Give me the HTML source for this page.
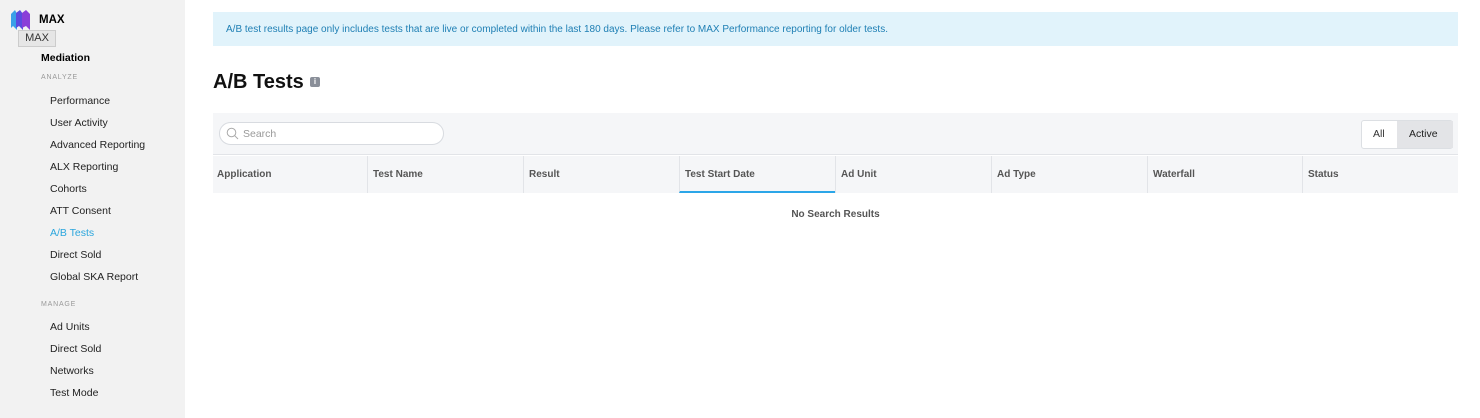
<!DOCTYPE html>
<html><head><style>
*{box-sizing:border-box;margin:0;padding:0}
body{width:1480px;height:418px;overflow:hidden;background:#fff;font-family:"Liberation Sans",sans-serif;position:relative}
.side{position:absolute;left:0;top:0;width:185px;height:418px;background:#f2f2f2}
.side .it{position:absolute;left:50px;font-size:10.5px;color:#222}
.side .hd{position:absolute;left:41px;font-size:7px;color:#999;letter-spacing:.8px}
.banner{position:absolute;left:213px;top:12px;width:1245px;height:34px;background:#e1f3fb;color:#1e7fb4;font-size:10px;line-height:35px;padding-left:13px}
h1{position:absolute;left:213px;top:71px;font-size:20px;font-weight:bold;color:#111}
.info{position:absolute;left:310px;top:77px;width:10px;height:10px;background:#8a8f99;border-radius:2px;color:#fff;font-size:8px;text-align:center;line-height:10px;font-weight:bold}
.tb{position:absolute;left:213px;top:113px;width:1245px;height:42px;background:#f5f6f8;border-bottom:1px solid #e2e4e8}
.search{position:absolute;left:6px;top:9px;width:225px;height:23px;border:1px solid #d8dbe0;border-radius:12px;background:#fff;font-size:10.5px;color:#999;line-height:22px;padding-left:23px}
.seg{position:absolute;left:1148px;top:7px;width:92px;height:29px;border:1px solid #dcdfe3;border-radius:3px;background:#fff;font-size:10.5px}
.seg span{position:absolute;top:0;line-height:27px}
.hr{position:absolute;left:213px;top:156px;width:1245px;height:37px;background:#f5f6f8}
.col{position:absolute;top:0;height:37px;border-left:1px solid #e2e4e8;font-size:10px;font-weight:bold;color:#555;line-height:37px;padding-left:5px}
</style></head><body>
<div class="side">
<svg style="position:absolute;left:10px;top:10px" width="22" height="20" viewBox="0 0 22 20"><path d="M1 4 L5 0 L7 4 L7 20 L3 16 L1 18Z" fill="#3aa0e8"/><path d="M6 3 L10 0 L13 4 L13 20 L9 16 L6 18Z" fill="#5a4be0"/><path d="M12 3 L16 0 L20 4 L20 20 L16 16 L12 18Z" fill="#8a3ed8"/></svg>
<div style="position:absolute;left:39px;top:14px;font-size:11.5px;font-weight:bold">MAX</div>
<div style="position:absolute;left:18px;top:30px;width:38px;height:17px;background:#e6e6e6;border:1px solid #ccc;font-size:11px;line-height:15px;text-align:center;color:#333">MAX</div>
<div style="position:absolute;left:41px;top:52px;font-size:10.5px;font-weight:bold">Mediation</div>
<div class="hd" style="top:74px">ANALYZE</div>
<div class="it" style="top:95px">Performance</div>
<div class="it" style="top:117px">User Activity</div>
<div class="it" style="top:139px">Advanced Reporting</div>
<div class="it" style="top:161px">ALX Reporting</div>
<div class="it" style="top:183px">Cohorts</div>
<div class="it" style="top:205px">ATT Consent</div>
<div class="it" style="top:227px;color:#2ba6dd">A/B Tests</div>
<div class="it" style="top:249px">Direct Sold</div>
<div class="it" style="top:271px">Global SKA Report</div>
<div class="hd" style="top:301px">MANAGE</div>
<div class="it" style="top:321px">Ad Units</div>
<div class="it" style="top:343px">Direct Sold</div>
<div class="it" style="top:365px">Networks</div>
<div class="it" style="top:387px">Test Mode</div>
</div>
<div class="banner">A/B test results page only includes tests that are live or completed within the last 180 days. Please refer to MAX Performance reporting for older tests.</div>
<h1>A/B Tests</h1><div class="info">i</div>
<div class="tb">
<div class="search"><svg style="position:absolute;left:6px;top:4px" width="13" height="13" viewBox="0 0 13 13"><circle cx="5.5" cy="5.5" r="4.3" fill="none" stroke="#aaa" stroke-width="1"/><path d="M8.7 8.7L12 12" stroke="#aaa"/></svg>Search</div>
<div class="seg"><span style="left:11px;color:#333">All</span><div style="position:absolute;left:35px;top:0;width:56px;height:27px;background:#e3e4e7"></div><span style="left:47px;color:#222">Active</span></div>
</div>
<div class="hr">
<div class="col" style="left:0;border:none;padding-left:4px">Application</div>
<div class="col" style="left:154px">Test Name</div>
<div class="col" style="left:310px">Result</div>
<div class="col" style="left:466px;width:156px;border-bottom:2px solid #2ba6e8">Test Start Date</div>
<div class="col" style="left:622px">Ad Unit</div>
<div class="col" style="left:778px">Ad Type</div>
<div class="col" style="left:934px">Waterfall</div>
<div class="col" style="left:1089px">Status</div>
</div>
<div style="position:absolute;left:213px;width:1245px;top:209px;text-align:center;font-size:10px;font-weight:bold;color:#555">No Search Results</div>
</body></html>
